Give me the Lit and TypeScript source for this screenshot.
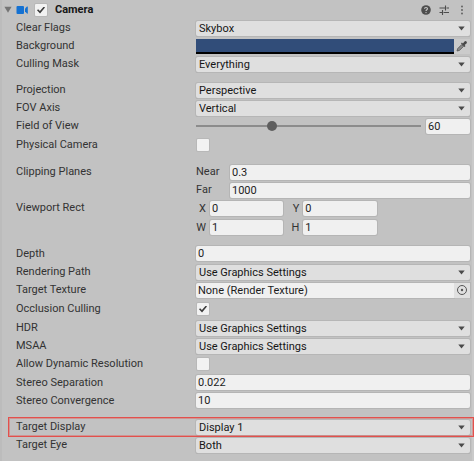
import { LitElement, html, css, svg, TemplateResult } from "lit";
import { customElement, property } from "lit/decorators.js";

const control = css`
  * { box-sizing: border-box; }
  input, select, button {
    font: inherit;
    color: inherit;
    margin: 0;
    border: 0;
    border-radius: 0;
    outline-offset: 0;
  }
  .text {
    display: block;
    width: 100%;
    min-width: 0;
    height: 15px;
    padding: 0 2px;
    line-height: 15px;
    color: #1c1c1c;
    background: #f0f0f0;
    border-radius: 2px;
    box-shadow: 0 0 0 1px #b5b5b5;
  }
  .check {
    appearance: none;
    display: grid;
    place-items: center;
    width: 12px;
    height: 12px;
    background: #f2f2f2;
    border-radius: 1px;
    box-shadow: 0 0 0 1px #b8b8b8;
  }
  .check:checked::before {
    content: "";
    width: 8px;
    height: 7px;
    background: #3c3c3c;
    clip-path: polygon(0 54%, 14% 40%, 36% 66%, 86% 0, 100% 14%, 38% 100%);
  }
`;

@customElement("drop-down")
class DropDown extends LitElement {
  @property() value = "";
  @property() name = "";
  static styles = [control, css`
    :host { display: grid; align-items: center; }
    select, svg { grid-area: 1 / 1; }
    select {
      appearance: none;
      width: 100%;
      height: 15px;
      padding: 0 20px 0 3px;
      line-height: 15px;
      color: #161616;
      background: #dfdfdf;
      border-radius: 2px;
      box-shadow: 0 0 0 1px #b6b6b6, 0 1px 0 0 #979797;
    }
    svg {
      justify-self: end;
      margin-right: 5px;
      width: 7px;
      height: 5px;
      fill: #4a4a4a;
      pointer-events: none;
    }
  `];
  render() {
    return html`
      <select aria-label=${this.name}><option>${this.value}</option></select>
      <svg viewBox="0 0 7 5"><path d="M.3.5h6.4L3.5 4.6z" /></svg>
    `;
  }
}

type Field =
  | { kind: "select" | "text" | "object"; label: string; value: string; mark?: boolean }
  | { kind: "toggle"; label: string; on: boolean }
  | { kind: "color"; label: string; value: string }
  | { kind: "slider"; label: string; value: number }
  | { kind: "planes"; label: string; items: [string, string][] }
  | { kind: "rect"; label: string; items: [string, string][] };

const groups: Field[][] = [
  [
    { kind: "select", label: "Clear Flags", value: "Skybox" },
    { kind: "color", label: "Background", value: "#314d79" },
    { kind: "select", label: "Culling Mask", value: "Everything" },
  ],
  [
    { kind: "select", label: "Projection", value: "Perspective" },
    { kind: "select", label: "FOV Axis", value: "Vertical" },
    { kind: "slider", label: "Field of View", value: 60 },
    { kind: "toggle", label: "Physical Camera", on: false },
  ],
  [
    { kind: "planes", label: "Clipping Planes", items: [["Near", "0.3"], ["Far", "1000"]] },
    { kind: "rect", label: "Viewport Rect", items: [["X", "0"], ["Y", "0"], ["W", "1"], ["H", "1"]] },
  ],
  [
    { kind: "text", label: "Depth", value: "0" },
    { kind: "select", label: "Rendering Path", value: "Use Graphics Settings" },
    { kind: "object", label: "Target Texture", value: "None (Render Texture)" },
    { kind: "toggle", label: "Occlusion Culling", on: true },
    { kind: "select", label: "HDR", value: "Use Graphics Settings" },
    { kind: "select", label: "MSAA", value: "Use Graphics Settings" },
    { kind: "toggle", label: "Allow Dynamic Resolution", on: false },
    { kind: "text", label: "Stereo Separation", value: "0.022" },
    { kind: "text", label: "Stereo Convergence", value: "10" },
  ],
  [
    { kind: "select", label: "Target Display", value: "Display 1", mark: true },
    { kind: "select", label: "Target Eye", value: "Both" },
  ],
];

const icons = {
  fold: svg`<path d="M.5 1h9L5 8.4z" fill="#757575" />`,
  camera: svg`<g fill="#1471d2"><rect x=".5" y="1" width="7.5" height="8" rx="1" /><path d="M9 3.6 11 1.6q.8-.6.8.4v6q0 1-.8.4L9 6.4z" /></g>`,
  help: svg`<circle cx="6" cy="6" r="4.8" fill="#4d4d4d" /><path d="M4.5 4.8C4.5 3 7.5 3 7.5 4.8 7.5 5.8 6 5.8 6 7" fill="none" stroke="#c8c8c8" stroke-width="1.1" /><circle cx="6" cy="8.6" r=".7" fill="#c8c8c8" />`,
  preset: svg`<path d="M1.500 4h5.500M8.500 4h2.500M7.500 1.500v5M1.500 8.500h2.500M5.500 8.500h5.500M4.500 6v5" fill="none" stroke="#4d4d4d" stroke-width="1.100" />`,
  menu: svg`<g fill="#5a5a5a"><circle cx="6" cy="2.5" r=".9" /><circle cx="6" cy="6" r=".9" /><circle cx="6" cy="9.5" r=".9" /></g>`,
  dropper: svg`<path d="M1 11l.7-2.4 4-4 1.800 1.800-4 4z" fill="#8b8b8b" stroke="#555" stroke-width=".8" /><path d="M5 3.400l.9-.9 1 .9 1.600-1.900q1.100-1 2 0t0 2L8.600 5.100l.9 1-.9.9z" fill="#484848" />`,
  picker: svg`<circle cx="6" cy="6" r="4.500" fill="none" stroke="#555" /><circle cx="6" cy="6" r="1.200" fill="#555" />`,
};

@customElement("app-root")
class AppRoot extends LitElement {
  static styles = [control, css`
    :host {
      display: block;
      min-height: 100vh;
      box-sizing: border-box;
      padding: 0 2px;
      font: 11px/18px Roboto, "Liberation Sans", sans-serif;
      color: #333;
      background: linear-gradient(90deg, #bcbcbc 2px, #c2c2c2 2px calc(100% - 2px), #cacaca calc(100% - 2px));
    }
    svg { display: block; width: 12px; height: 12px; }
    button {
      display: grid;
      place-items: center;
      width: 16px;
      height: 15px;
      padding: 0;
      background: none;
    }
    .head {
      display: flex;
      align-items: center;
      height: 19px;
      padding: 1px 2px 0 2px;
    }
    .head .fold { width: 8px; }
    .fold svg { width: 8px; height: 8px; }
    .camera { width: 12px; height: 10px; margin: 0 7px 0 4px; }
    .title { flex: 1; margin-left: 8px; font-weight: 700; color: #161616; }
    .tools { display: flex; gap: 2px; }
    .group { margin-bottom: 8px; }
    .row {
      position: relative;
      display: grid;
      grid-template-columns: 180px minmax(0, 1fr);
      margin: 0 2px 0 14px;
    }
    .row.tall { min-height: 19px; }
    .body { min-height: 18px; padding-top: 1px; }
    .marked::after {
      content: "";
      position: absolute;
      inset: -1px -4px -1px -8px;
      border: 1px solid #e3504c;
      box-shadow: inset 0 0 0 1px #e3504c66;
      pointer-events: none;
    }
    .toggle { padding: 3px 0 0 1px; }
    .color, .slider, .object { display: flex; align-items: center; height: 16px; }
    .swatch {
      flex: 1;
      min-width: 0;
      height: 15px;
      padding: 0;
      background: #000;
      appearance: none;
    }
    .swatch::-webkit-color-swatch-wrapper { padding: 0 0 2px; }
    .swatch::-webkit-color-swatch { border: 0; border-radius: 0; }
    .color button { background: #cbcbcb; }
    .slider { gap: 5px; }
    .range {
      appearance: none;
      flex: 1;
      min-width: 0;
      height: 10px;
      background: linear-gradient(#8c8c8c, #8c8c8c) center / 100% 2px no-repeat;
    }
    .range::-webkit-slider-thumb {
      appearance: none;
      width: 10px;
      height: 10px;
      border-radius: 50%;
      background: #5e5e5e;
    }
    .slider .text { width: 44px; }
    .object .text { flex: 1; border-radius: 2px 0 0 2px; }
    .object button { background: #e0e0e0; box-shadow: 0 0 0 1px #b5b5b5; clip-path: inset(-1px -1px -1px 0); }
    .plane {
      display: grid;
      grid-template-columns: 34px 1fr;
      align-items: center;
      height: 18px;
    }
    .rect {
      display: grid;
      grid-template-columns: repeat(3, minmax(0, 1fr));
      grid-auto-rows: 19px;
      column-gap: 6px;
    }
    .cell { display: grid; grid-template-columns: 14px 1fr; align-items: center; }
    .cell span { text-align: right; padding-right: 4px; }
    .cell:nth-child(odd) { grid-column: 1; }
  `];

  body(f: Field, id: string): TemplateResult {
    switch (f.kind) {
      case "select":
        return html`<drop-down class="body" .value=${f.value} .name=${f.label}></drop-down>`;
      case "text":
        return html`<div class="body"><input class="text" id=${id} .value=${f.value} /></div>`;
      case "object":
        return html`<div class="body"><div class="object">
          <input class="text" id=${id} readonly .value=${f.value} />
          <button aria-label="Select texture"><svg viewBox="0 0 12 12">${icons.picker}</svg></button>
        </div></div>`;
      case "toggle":
        return html`<div class="toggle"><input class="check" id=${id} type="checkbox" .checked=${f.on} /></div>`;
      case "color":
        return html`<div class="body"><div class="color">
          <input class="swatch" id=${id} type="color" .value=${f.value} />
          <button aria-label="Pick color"><svg viewBox="0 0 12 12">${icons.dropper}</svg></button>
        </div></div>`;
      case "slider":
        return html`<div class="body"><div class="slider">
          <input class="range" id=${id} type="range" min="1" max="179" .value=${String(f.value)} />
          <input class="text" aria-label=${f.label} .value=${String(f.value)} />
        </div></div>`;
      case "planes":
        return html`<div>${f.items.map(([k, v]) => html`
          <label class="plane"><span>${k}</span><input class="text" .value=${v} /></label>`)}</div>`;
      case "rect":
        return html`<div class="rect">${f.items.map(([k, v]) => html`
          <label class="cell"><span>${k}</span><input class="text" .value=${v} /></label>`)}</div>`;
    }
  }

  row(f: Field, id: string) {
    const tall = ["toggle", "object", "slider"].includes(f.kind) ? "tall" : "";
    const marked = f.kind === "select" && f.mark ? "marked" : "";
    const grouped = f.kind === "planes" || f.kind === "rect" || f.kind === "select";
    return html`<div class="row ${tall} ${marked}">
      ${grouped ? html`<span>${f.label}</span>` : html`<label for=${id}>${f.label}</label>`}
      ${this.body(f, id)}
    </div>`;
  }

  render() {
    return html`
      <header class="head">
        <button class="fold" aria-label="Collapse"><svg viewBox="0 0 10 10">${icons.fold}</svg></button>
        <svg class="camera" viewBox="0 0 12 10">${icons.camera}</svg>
        <input class="check" id="enabled" type="checkbox" checked />
        <label class="title" for="enabled">Camera</label>
        <div class="tools">
          <button aria-label="Help"><svg viewBox="0 0 12 12">${icons.help}</svg></button>
          <button aria-label="Presets"><svg viewBox="0 0 12 12">${icons.preset}</svg></button>
          <button aria-label="Menu"><svg viewBox="0 0 12 12">${icons.menu}</svg></button>
        </div>
      </header>
      ${groups.map((g, i) => html`<section class="group">
        ${g.map((f, j) => this.row(f, `field-${i}-${j}`))}
      </section>`)}
    `;
  }
}
